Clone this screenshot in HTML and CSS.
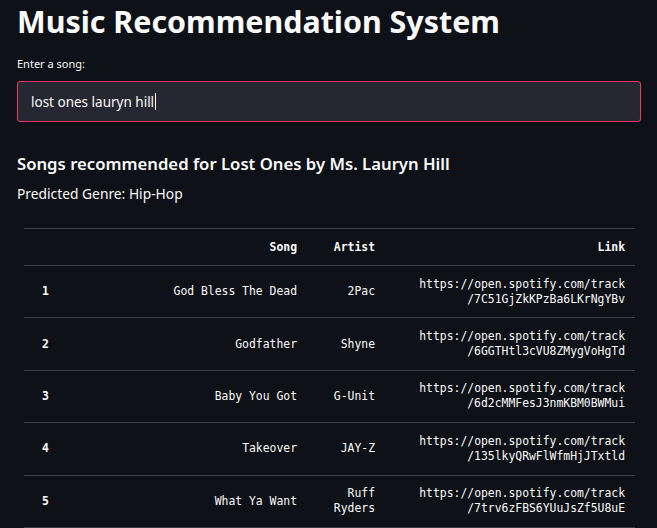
FILE: index.html
```html
<!DOCTYPE html>
<html>
<head>
<meta charset="utf-8">
<link rel="stylesheet" href="styles.css">
</head>
<body>
<main class="app">
  <h1 class="title">Music Recommendation System</h1>
  <label class="label">Enter a song:</label>
  <div class="input"><span class="input-text">lost ones lauryn hill</span><span class="caret"></span></div>
  <h3 class="subtitle">Songs recommended for Lost Ones by Ms. Lauryn Hill</h3>
  <p class="genre">Predicted Genre: Hip-Hop</p>
  <table class="table">
    <colgroup>
      <col class="c-idx"><col class="c-song"><col class="c-artist"><col class="c-link">
    </colgroup>
    <thead>
      <tr><th></th><th>Song</th><th>Artist</th><th>Link</th></tr>
    </thead>
    <tbody>
      <tr><th class="idx">1</th><td>God Bless The Dead</td><td>2Pac</td><td>https://open.spotify.com/track<br>/7C51GjZkKPzBa6LKrNgYBv</td></tr>
      <tr><th class="idx">2</th><td>Godfather</td><td>Shyne</td><td>https://open.spotify.com/track<br>/6GGTHtl3cVU8ZMygVoHgTd</td></tr>
      <tr><th class="idx">3</th><td>Baby You Got</td><td>G-Unit</td><td>https://open.spotify.com/track<br>/6d2cMMFesJ3nmKBM0BWMui</td></tr>
      <tr><th class="idx">4</th><td>Takeover</td><td>JAY-Z</td><td>https://open.spotify.com/track<br>/135lkyQRwFlWfmHjJTxtld</td></tr>
      <tr><th class="idx">5</th><td>What Ya Want</td><td>Ruff<br>Ryders</td><td>https://open.spotify.com/track<br>/7trv6zFBS6YUuJsZf5U8uE</td></tr>
    </tbody>
  </table>
</main>
</body>
</html>
```
FILE: styles.css
```css
html, body {
  margin: 0;
  padding: 0;
  background: #0e1117;
  color: #fafafa;
  font-family: "Noto Sans", "Open Sans", sans-serif;
}

.app {
  width: 624px;
  padding: 0 16px 0 17px;
}

.title {
  margin: 0;
  padding-top: 4px;
  font-size: 30.4px;
  line-height: 36px;
  font-weight: 700;
  letter-spacing: 0;
}

.label {
  display: block;
  margin-top: 17px;
  font-size: 11px;
  line-height: 14px;
}

.input {
  box-sizing: border-box;
  margin-top: 10px;
  height: 41px;
  display: flex;
  align-items: center;
  padding: 0 13px;
  background: #262730;
  border: 1px solid #f63366;
  border-radius: 3px;
  font-size: 13.5px;
}

.caret {
  display: inline-block;
  width: 1px;
  height: 17px;
  margin-left: 1px;
  background: #fafafa;
}

.subtitle {
  margin: 30px 0 0;
  font-size: 16.7px;
  line-height: 24px;
  font-weight: 600;
}

.genre {
  margin: 9px 0 0;
  font-size: 13.8px;
  line-height: 18px;
}

.table {
  margin: 25px 0 0 7px;
  width: 611px;
  table-layout: fixed;
  border-collapse: collapse;
  font-family: "DejaVu Sans Mono", monospace;
  font-size: 11.4px;
  line-height: 15px;
}

.c-idx { width: 76px; }
.c-song { width: 207px; }
.c-artist { width: 78px; }
.c-link { width: 250px; }

.table th,
.table td {
  text-align: right;
  padding: 0 10px;
  border-top: 1px solid #3d4046;
  border-bottom: 1px solid #3d4046;
  font-weight: 400;
  vertical-align: middle;
}

.table thead th {
  height: 36px;
  font-weight: 700;
}

.table tbody th,
.table tbody td {
  height: 51.4px;
}

.table .idx {
  text-align: left;
  padding-left: 18px;
  font-weight: 700;
}
```
